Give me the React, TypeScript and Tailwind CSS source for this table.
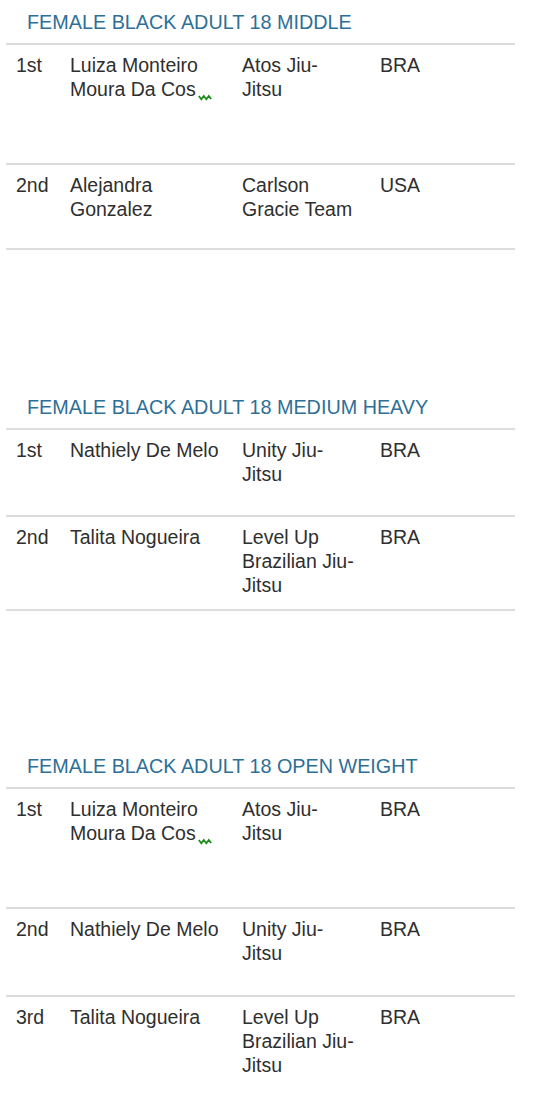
import React from 'react';

type Row = { rank: string; name: React.ReactNode; team: string; country: string; h: string };
type Division = { title: string; mt: string; rows: Row[]; last: boolean };

const Squiggle = () => (
  <svg width="14" height="7" viewBox="0 0 14 7" className="inline-block align-baseline -mb-[5px] ml-[2px]">
    <path d="M0.8 2 L3.3 5.2 L5.8 2 L8.3 5.2 L10.8 2 L13.2 5" fill="none" stroke="#1e8b1e" strokeWidth="1.8" />
  </svg>
);

const luiza = (
  <>
    Luiza Monteiro Moura Da Cos<Squiggle />
  </>
);

const divisions: Division[] = [
  {
    title: 'FEMALE BLACK ADULT 18 MIDDLE',
    mt: 'mt-0',
    last: true,
    rows: [
      { rank: '1st', name: luiza, team: 'Atos Jiu-Jitsu', country: 'BRA', h: 'h-[120px]' },
      { rank: '2nd', name: 'Alejandra Gonzalez', team: 'Carlson Gracie Team', country: 'USA', h: 'h-[85px]' },
    ],
  },
  {
    title: 'FEMALE BLACK ADULT 18 MEDIUM HEAVY',
    mt: 'mt-[135px]',
    last: true,
    rows: [
      { rank: '1st', name: 'Nathiely De Melo', team: 'Unity Jiu-Jitsu', country: 'BRA', h: 'h-[87px]' },
      { rank: '2nd', name: 'Talita Nogueira', team: 'Level Up Brazilian Jiu-Jitsu', country: 'BRA', h: 'h-[94px]' },
    ],
  },
  {
    title: 'FEMALE BLACK ADULT 18 OPEN WEIGHT',
    mt: 'mt-[133px]',
    last: false,
    rows: [
      { rank: '1st', name: luiza, team: 'Atos Jiu-Jitsu', country: 'BRA', h: 'h-[120px]' },
      { rank: '2nd', name: 'Nathiely De Melo', team: 'Unity Jiu-Jitsu', country: 'BRA', h: 'h-[88px]' },
      { rank: '3rd', name: 'Talita Nogueira', team: 'Level Up Brazilian Jiu-Jitsu', country: 'BRA', h: 'h-[110px]' },
    ],
  },
];

export default function App() {
  return (
    <div className="w-[534px] min-h-[1098px] bg-white overflow-hidden font-['Liberation_Sans',Arial,sans-serif] text-[#2f2f2f]">
      <div className="ml-[6px] w-[509px]">
        {divisions.map((d) => (
          <section key={d.title} className={d.mt}>
            {/* Division title */}
            <h3 className="pt-[10px] mb-[9px] pl-[21px] text-[19.8px] leading-[24px] font-normal text-[#2e6f98] whitespace-nowrap">
              {d.title}
            </h3>

            {/* Results table */}
            <div className={d.last ? 'border-b-2 border-[#ddd]' : ''}>
              {d.rows.map((r, i) => (
                <div key={i} className={`flex border-t-2 border-[#ddd] pt-[8px] text-[19.5px] leading-[24px] ${r.h}`}>
                  <div className="w-[54px] pl-[10px] shrink-0">{r.rank}</div>
                  <div className="w-[172px] pl-[10px] pr-[2px] shrink-0">{r.name}</div>
                  <div className="w-[138px] pl-[10px] pr-[13px] shrink-0">{r.team}</div>
                  <div className="flex-1 pl-[10px]">{r.country}</div>
                </div>
              ))}
            </div>
          </section>
        ))}
      </div>
    </div>
  );
}
